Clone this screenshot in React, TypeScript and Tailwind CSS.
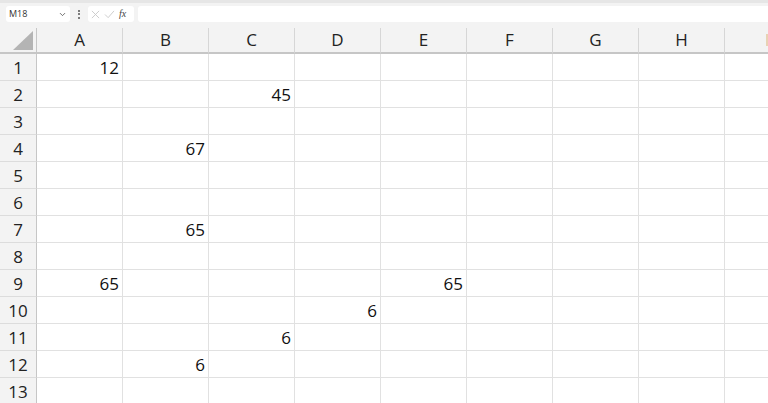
import { ChevronDown } from 'lucide-react';

const COLS = ['A', 'B', 'C', 'D', 'E', 'F', 'G', 'H', 'I'];
const ROWS = Array.from({ length: 14 }, (_, i) => i + 1);

// valores por linha/coluna
const DATA: Record<string, string> = {
  '1-A': '12',
  '2-C': '45',
  '4-B': '67',
  '7-B': '65',
  '9-A': '65',
  '9-E': '65',
  '10-D': '6',
  '11-C': '6',
  '12-B': '6',
};

export default function App() {
  return (
    <div className="w-[768px] h-[403px] overflow-hidden bg-white" style={{ fontFamily: '"Open Sans", "Noto Sans", sans-serif' }}>
      {/* Barra de fórmulas */}
      <div className="h-[28px] bg-[#f3f3f3] border-t-[3px] border-[#e6e6e6] flex items-start pt-[3px] gap-[4px] pl-[6px]">
        <div className="w-[64px] h-[16px] bg-white rounded-[3px] flex items-center justify-between px-[3px] text-[9px] text-[#333]">
          <span>M18</span>
          <ChevronDown size={9} strokeWidth={2} className="text-[#444]" />
        </div>
        <div className="w-[10px] h-[16px] flex flex-col items-center justify-center gap-[1.5px]">
          <span className="w-[2px] h-[2px] rounded-full bg-[#555]" />
          <span className="w-[2px] h-[2px] rounded-full bg-[#555]" />
          <span className="w-[2px] h-[2px] rounded-full bg-[#555]" />
        </div>
        <div className="w-[46px] h-[16px] bg-white rounded-[3px] flex items-center gap-[4px] px-[3px]">
          <svg width="9" height="9" viewBox="0 0 10 10" className="text-[#c8c8c8]">
            <path d="M1 1 L9 9 M9 1 L1 9" stroke="currentColor" strokeWidth="1" />
          </svg>
          <svg width="11" height="9" viewBox="0 0 12 10" className="text-[#c8c8c8]">
            <path d="M1 5 L4.5 8.5 L11 1" stroke="currentColor" strokeWidth="1" fill="none" />
          </svg>
          <span className="italic text-[10px] text-[#444] leading-none" style={{ fontFamily: '"Liberation Serif", serif' }}>fx</span>
        </div>
        <div className="flex-1 h-[16px] bg-white rounded-l-[3px]" />
      </div>

      {/* Grade */}
      <div className="grid grid-cols-[37px_repeat(9,86px)]">
        <div className="h-[26px] bg-[#f3f3f3] border-r border-b-2 border-[#c6c6c6] flex items-end justify-end pr-[3px] pb-[2px]">
          <svg width="20" height="19" viewBox="0 0 20 19">
            <polygon points="20,0 20,19 0,19" fill="#b4b4b4" />
          </svg>
        </div>
        {COLS.map((c) => (
          <div
            key={c}
            className="h-[26px] bg-[#f3f3f3] border-r border-[#d6d6d6] border-b-2 border-b-[#c6c6c6] flex items-center justify-center text-[17px] text-[#222]"
          >
            {c === 'I' ? (
              <span className="ml-auto mr-[41px] w-[3px] h-[12px] bg-[#e8d2b4]" />
            ) : (
              c
            )}
          </div>
        ))}
        {ROWS.map((r) => (
          <Row key={r} r={r} />
        ))}
      </div>
    </div>
  );
}

function Row({ r }: { r: number }) {
  return (
    <>
      <div className="h-[27px] bg-[#f3f3f3] border-r border-r-[#c6c6c6] border-b border-b-[#dcdcdc] flex items-center justify-center pt-[1px] text-[17px] text-[#222]">
        {r}
      </div>
      {COLS.map((c) => (
        <div
          key={c}
          className="h-[27px] border-r border-b border-[#e1e1e1] flex items-center justify-end pr-[3px] pt-[1px] text-[17px] text-[#111]"
        >
          {DATA[`${r}-${c}`] ?? ''}
        </div>
      ))}
    </>
  );
}
